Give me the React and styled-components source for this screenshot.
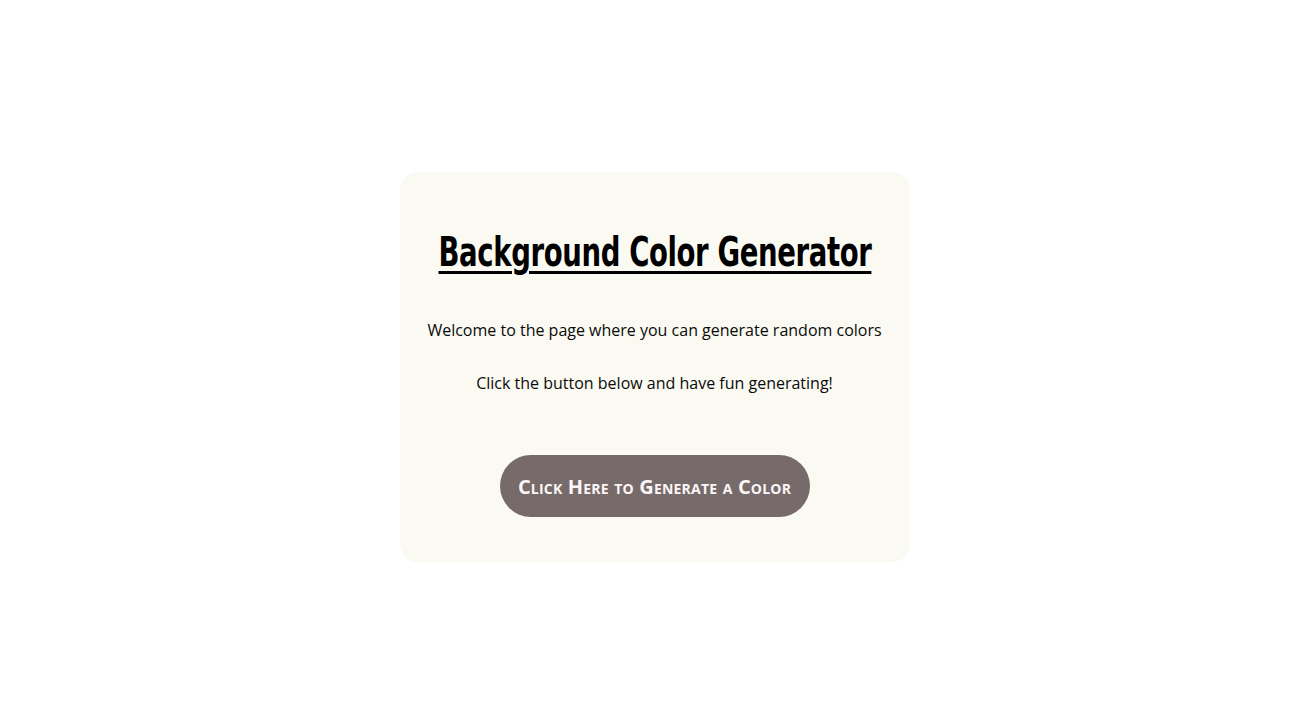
import styled, { createGlobalStyle } from "styled-components";

const GlobalStyle = createGlobalStyle`
  * {
    box-sizing: border-box;
  }

  body {
    margin: 0;
    background: #ffffff;
    font-family: "Open Sans", "Noto Sans", sans-serif;
  }
`;

const Page = styled.main`
  width: 100%;
  min-height: 100vh;
  display: flex;
  justify-content: center;
  align-items: flex-start;
  padding-top: 172px;
`;

const Card = styled.section`
  width: 510px;
  margin-left: 1px;
  background: #fafaf2;
  border-radius: 18px;
  display: flex;
  flex-direction: column;
  align-items: center;
  padding: 54px 0 45px;
`;

/* no Oswald offline: condensed DejaVu squeezed a little more */
const Title = styled.h1`
  margin: 0 0 41px;
  font-family: "DejaVu Sans", sans-serif;
  font-stretch: condensed;
  font-weight: 700;
  font-size: 40px;
  line-height: 52px;
  letter-spacing: -0.5px;
  white-space: nowrap;
  text-align: center;
  color: #000;
  text-decoration: underline;
  text-decoration-thickness: 3px;
  text-underline-offset: 5px;
  transform: scaleX(0.765);
`;

const Text = styled.p`
  margin: 0 0 ${(p) => p.$gap}px;
  font-size: 16px;
  line-height: 22px;
  color: #0a0a0a;
  text-align: center;
`;

const GenerateButton = styled.button`
  width: 310px;
  height: 62px;
  border: none;
  border-radius: 31px;
  background: #776a6a;
  color: #fbf6f6;
  font-family: "Open Sans", "Noto Sans", sans-serif;
  font-weight: 700;
  font-size: 20px;
  letter-spacing: 0.2px;
  font-variant: small-caps;
  cursor: pointer;
`;

const App = () => {
  return (
    <>
      <GlobalStyle />
      <Page>
        <Card>
          <Title>Background Color Generator</Title>
          <Text $gap={31}>Welcome to the page where you can generate random colors</Text>
          <Text $gap={61}>Click the button below and have fun generating!</Text>
          <GenerateButton>Click Here to Generate a Color</GenerateButton>
        </Card>
      </Page>
    </>
  );
};

export default App;
